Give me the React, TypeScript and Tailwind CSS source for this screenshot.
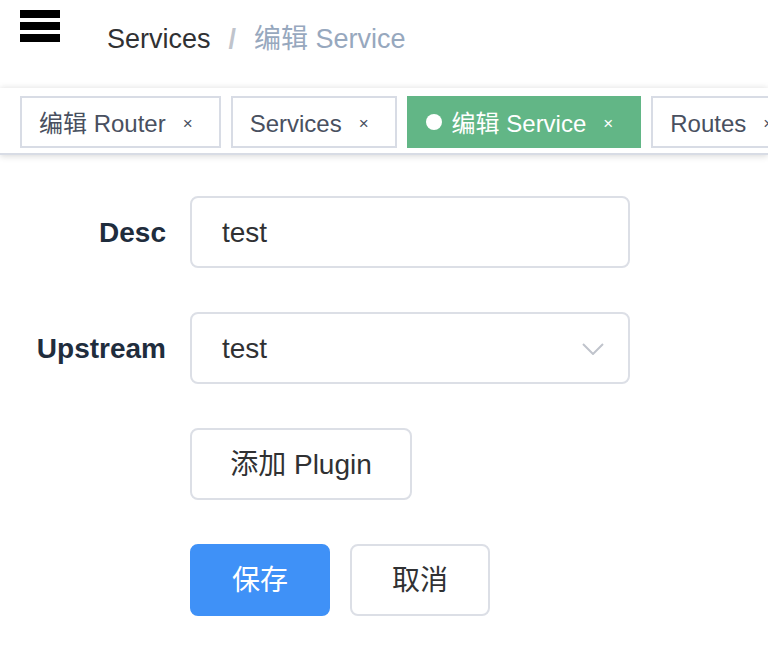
const font = "font-['Liberation_Sans','Noto_Sans_CJK_SC',sans-serif]";

const tags = [
  { label: "编辑 Router", active: false },
  { label: "Services", active: false },
  { label: "编辑 Service", active: true },
  { label: "Routes", active: false },
];

function Tag({ label, active }: { label: string; active: boolean }) {
  return (
    <div
      className={[
        "flex h-[52px] shrink-0 items-center border-2 pl-[17px] pr-[26px] pt-[4px] text-[24px]",
        active
          ? "border-[#62b686] bg-[#62b686] text-white"
          : "border-[#d8dce5] bg-white text-[#495060]",
      ].join(" ")}
    >
      {active && <span className="mb-[3px] mr-[10px] h-[16px] w-[16px] rounded-full bg-white" />}
      <span>{label}</span>
      <span className="ml-[17px] text-[17px] leading-none">×</span>
    </div>
  );
}

function FormRow({ label, children }: { label?: string; children: React.ReactNode }) {
  return (
    <div className="mb-[44px] flex items-center">
      <div className="w-[190px] shrink-0 pr-[24px] pt-[2px] text-right text-[28px] font-bold text-[#1f2d3d]">
        {label}
      </div>
      {children}
    </div>
  );
}

export default function App() {
  return (
    <div className={`${font} min-h-[664px] w-[768px] overflow-hidden bg-white`}>
      {/* navbar */}
      <div className="flex h-[88px] items-start">
        <div className="ml-[20px] mt-[10px] flex w-[40px] flex-col gap-[4px]">
          <span className="h-[8px] bg-black" />
          <span className="h-[8px] bg-black" />
          <span className="h-[8px] bg-black" />
        </div>
        <div className="ml-[47px] flex h-[78px] items-center text-[27px]">
          <span className="text-[#303133]">Services</span>
          <span className="mx-[18px] font-bold text-[#c0c4cc]">/</span>
          <span className="text-[#97a8be]">编辑 Service</span>
        </div>
      </div>

      {/* tags view */}
      <div className="flex h-[67px] items-center gap-[10px] overflow-hidden whitespace-nowrap border-b-2 border-[#d8dce5] pl-[20px] pt-[2px] shadow-[0_2px_6px_0_rgba(0,0,0,0.12),0_-2px_6px_0_rgba(0,0,0,0.05)]">
        {tags.map((t) => (
          <Tag key={t.label} label={t.label} active={t.active} />
        ))}
      </div>

      {/* form */}
      <div className="pt-[41px]">
        <FormRow label="Desc">
          <div className="flex h-[72px] w-[440px] items-center rounded-[8px] border-2 border-[#dcdfe6] px-[30px] pt-[2px] text-[28px] text-[#303133]">
            test
          </div>
        </FormRow>
        <FormRow label="Upstream">
          <div className="flex h-[72px] w-[440px] items-center justify-between rounded-[8px] border-2 border-[#dcdfe6] pl-[30px] pr-[24px] pt-[2px] text-[28px] text-[#303133]">
            <span>test</span>
            <svg width="22" height="12" viewBox="0 0 22 12" fill="none">
              <path d="M1 1l10 10L21 1" stroke="#c0c4cc" strokeWidth="2" />
            </svg>
          </div>
        </FormRow>
        <FormRow>
          <button className="h-[72px] w-[222px] rounded-[8px] border-2 border-[#dcdfe6] bg-white pt-[2px] text-[28px] text-[#303133]">
            添加 Plugin
          </button>
        </FormRow>
        <FormRow>
          <div className="flex gap-[20px]">
            <button className="h-[72px] w-[140px] rounded-[8px] border-2 border-[#3f91f7] bg-[#3f91f7] pt-[2px] text-[28px] text-white">
              保存
            </button>
            <button className="h-[72px] w-[140px] rounded-[8px] border-2 border-[#dcdfe6] bg-white pt-[2px] text-[28px] text-[#303133]">
              取消
            </button>
          </div>
        </FormRow>
      </div>
    </div>
  );
}
